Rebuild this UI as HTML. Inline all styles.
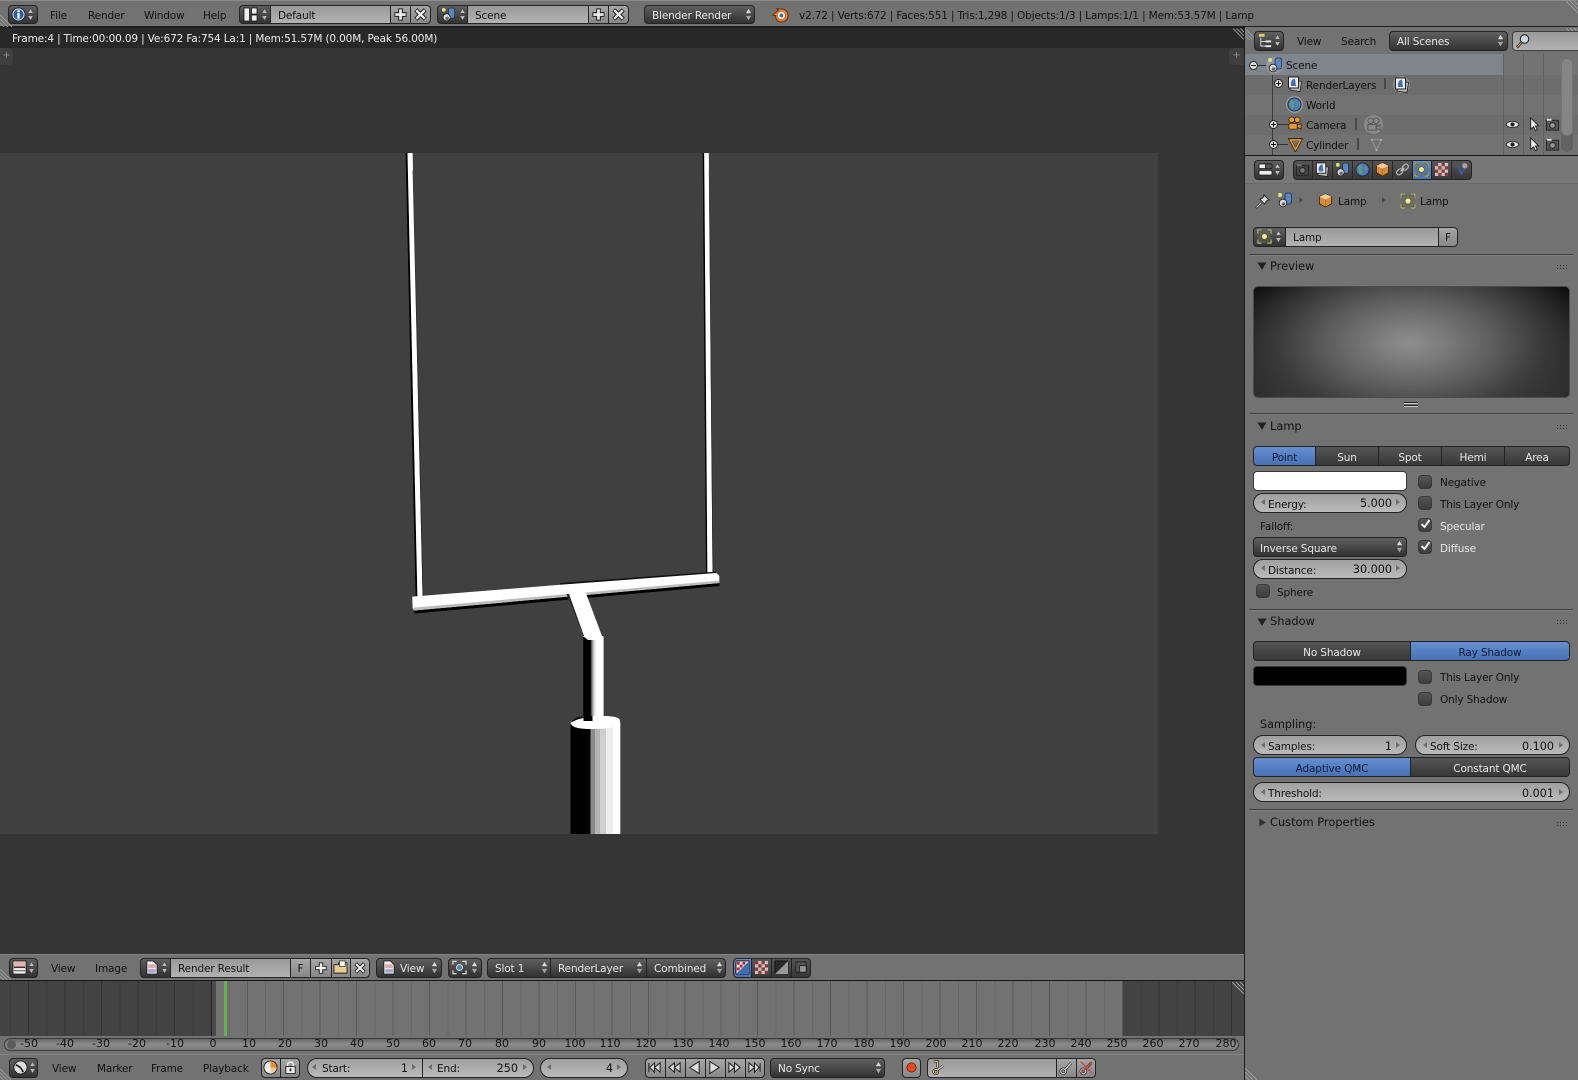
<!DOCTYPE html>
<html><head><meta charset="utf-8"><title>Blender</title>
<style>
html,body{margin:0;padding:0;background:#727272}
#r{position:relative;width:1578px;height:1080px;overflow:hidden;background:#727272;font:10.5px/16px "DejaVu Sans","Liberation Sans",sans-serif;letter-spacing:-.15px;color:#111}
#r div,#r span,#r svg{position:absolute;box-sizing:border-box}
.t{white-space:nowrap;height:16px;line-height:18px}
.w{color:#e8e8e8}
.c{transform:translateX(-50%)}
.b{border:1px solid #232323;white-space:nowrap;text-align:center;line-height:20px}
.l{line-height:22px}
.m{background:linear-gradient(#5f5f5f,#323232);color:#e8e8e8}
.f{background:linear-gradient(#999,#b2b2b2);color:#111;text-align:left;padding-left:7px}
.g{background:linear-gradient(#a6a6a6,#888)}
.n{background:linear-gradient(#a0a0a0,#bababa);border-radius:10px;color:#111}
.ra{background:linear-gradient(#555,#373737);color:#e8e8e8}
.on{background:linear-gradient(#658fd1,#4771b3);color:#0b1c3c}
.ck{width:14px;height:14px;border:1px solid #3a3a3a;border-radius:4px;background:linear-gradient(#555,#3d3d3d)}
.sep{left:1249px;width:324px;height:1px;background:#3f3f3f;box-shadow:0 1px 0 #7f7f7f}
.rl{top:1036px;transform:translateX(-50%);color:#111;height:16px;line-height:16px;font-size:11px;letter-spacing:0}
.v{font-size:11.2px;letter-spacing:0}
.ph{font-size:11.4px;letter-spacing:0;line-height:16px}
.la{width:0;height:0;border-top:3.5px solid transparent;border-bottom:3.5px solid transparent;border-right:4px solid #6d6d6d}
.rr{width:0;height:0;border-top:3.5px solid transparent;border-bottom:3.5px solid transparent;border-left:4px solid #6d6d6d}
</style></head><body><div id="r">
<svg width="0" height="0" style="left:0;top:0"><defs>
<symbol id="ud" viewBox="0 0 8 14"><path d="M4 0.5 7 5.5H1Z M4 13.5 1 8.5H7Z" fill="#bdbdbd" stroke="#333" stroke-width=".4"/></symbol>
<symbol id="ud2" viewBox="0 0 8 14"><path d="M4 0.5 7 5.5H1Z" fill="#d8d8d8"/><path d="M4 13.5 1 8.5H7Z" fill="#a8a8a8"/></symbol>
<symbol id="plus" viewBox="0 0 16 16"><path d="M8 1.5V14.5M1.5 8H14.5" stroke="#222" stroke-width="5" fill="none"/><path d="M8 2.5V13.5M2.5 8H13.5" stroke="#eee" stroke-width="2.8" fill="none"/></symbol>
<symbol id="xx" viewBox="0 0 16 16"><path d="M3 3 13 13M13 3 3 13" stroke="#222" stroke-width="4.6" fill="none"/><path d="M3.5 3.5 12.5 12.5M12.5 3.5 3.5 12.5" stroke="#eee" stroke-width="2.4" fill="none"/></symbol>
<symbol id="scene" viewBox="0 0 16 16"><circle cx="3" cy="3" r="2" fill="#e2e27a"/><rect x="8" y="1" width="6.5" height="11" rx="2" fill="#5b86c0" stroke="#1f2f4a" stroke-width=".8"/><circle cx="6" cy="11" r="3.8" fill="#dcdcdc" stroke="#222" stroke-width=".9"/><circle cx="6.5" cy="12" r="1.8" fill="#666"/></symbol>
<symbol id="rl" viewBox="0 0 16 16"><path d="M5 4 14.5 5.5 13 15.5 3 14Z" fill="#bbb" stroke="#222" stroke-width=".8"/><rect x="1.5" y="1" width="10" height="11" fill="#eee" stroke="#222" stroke-width="1"/><path d="M8 2.5C4 3 3.5 7 4 10L9 10Z" fill="#4270b8"/></symbol>
<symbol id="world" viewBox="0 0 16 16"><circle cx="8" cy="8" r="7" fill="#4d7db8" stroke="#1c2c44"/><path d="M4 4C7 2 8 5 7 7S9 11 6 13C4 11 3 7 4 4ZM11 4 13 7 11 9 10 6Z" fill="#6b9a6f"/></symbol>
<symbol id="cam" viewBox="0 0 16 16"><circle cx="5" cy="4" r="3" fill="#e69a3a" stroke="#3a2408" stroke-width=".9"/><circle cx="11" cy="4" r="3" fill="#e69a3a" stroke="#3a2408" stroke-width=".9"/><rect x="2" y="8" width="9" height="6" rx="1" fill="#e69a3a" stroke="#3a2408" stroke-width=".9"/><path d="M11 10 15 8V14L11 12Z" fill="#e69a3a" stroke="#3a2408" stroke-width=".9"/></symbol>
<symbol id="camg" viewBox="0 0 16 16"><circle cx="5" cy="4" r="3" fill="#8a8a8a" stroke="#555"/><circle cx="11" cy="4" r="3" fill="#8a8a8a" stroke="#555"/><rect x="2" y="8" width="9" height="6" fill="#8a8a8a" stroke="#555"/><path d="M11 10 15 8V14L11 12Z" fill="#8a8a8a" stroke="#555"/></symbol>
<symbol id="tri" viewBox="0 0 16 16"><path d="M2 2.5H14L8 14Z" fill="none" stroke="#3a2408" stroke-width="3"/><path d="M2.5 3H13.5L8 13.5Z" fill="none" stroke="#e69a3a" stroke-width="1.6"/></symbol>
<symbol id="trig" viewBox="0 0 16 16"><path d="M3 3H13L8 14Z" fill="none" stroke="#8f8f8f" stroke-width="1.2"/><circle cx="3" cy="3" r="1.2" fill="#aaa"/><circle cx="13" cy="3" r="1.2" fill="#aaa"/><circle cx="8" cy="14" r="1.2" fill="#aaa"/></symbol>
<symbol id="cube" viewBox="0 0 16 16"><path d="M8 1 14.5 4V11.5L8 15 1.5 11.5V4Z" fill="#d8893a" stroke="#3a2408" stroke-width=".9"/><path d="M1.5 4 8 7 14.5 4 8 1Z" fill="#f3cf9a"/><path d="M8 7V15" stroke="#a8631a" stroke-width=".6"/></symbol>
<symbol id="lamp" viewBox="0 0 16 16"><rect x="1" y="1" width="14" height="14" fill="#6b6b4e" opacity=".45"/><path d="M1 5V1H5M11 1H15V5M15 11V15H11M5 15H1V11" fill="none" stroke="#2c2c2c" stroke-width="2.4"/><path d="M1 5V1H5M11 1H15V5M15 11V15H11M5 15H1V11" fill="none" stroke="#c8d492" stroke-width="1.2"/><circle cx="8" cy="8" r="3" fill="#efef8e" stroke="#555" stroke-width=".7"/></symbol>
<symbol id="pin" viewBox="0 0 16 16"><path d="M1 15 6 10" stroke="#222" stroke-width="2"/><path d="M1.5 14.5 6 10" stroke="#ddd" stroke-width="1"/><path d="M9 2 14 7 11.5 8 9.5 11 5 6.5 8 4.5Z" fill="#ddd" stroke="#222" stroke-width="1"/></symbol>
<symbol id="scr" viewBox="0 0 16 16"><rect x="1" y="1" width="6" height="14" fill="#eee" stroke="#222"/><rect x="9" y="1" width="6" height="6.5" fill="#eee" stroke="#222"/><rect x="9" y="8.5" width="6" height="6.5" fill="#eee" stroke="#222"/></symbol>
<symbol id="blend" viewBox="0 0 18 18"><path d="M1 9 7 4.5 5 3 10 3C14 3 17 6 17 10S14 17 10 17 3.5 14 4 10L1 10Z" fill="#e8792c" stroke="#4a2408" stroke-width=".8"/><circle cx="10" cy="10" r="3.8" fill="#f5f5f5"/><circle cx="10" cy="10" r="2" fill="#3d6fb0"/></symbol>
<symbol id="outl" viewBox="0 0 16 16"><path d="M3 5V14H8M3 9H8" stroke="#ddd" stroke-width="1" fill="none"/><rect x="1" y="1" width="6" height="3" fill="#e8cd6a"/><path d="M8 9H14M8 14H14" stroke="#eee" stroke-width="2"/></symbol>
<symbol id="prop" viewBox="0 0 16 16"><rect x="1" y="2" width="14" height="5" rx="1.5" fill="#eee" stroke="#222"/><rect x="8" y="2" width="7" height="5" rx="1.5" fill="#555" stroke="#222"/><rect x="1" y="9" width="14" height="5" rx="1.5" fill="#eee" stroke="#222"/></symbol>
<symbol id="img" viewBox="0 0 16 16"><rect x="1" y="1" width="14" height="14" fill="#eee" stroke="#222"/><rect x="2" y="2" width="12" height="5" fill="#e8b4ae"/><rect x="2" y="7" width="12" height="1.6" fill="#333"/><rect x="2" y="10" width="12" height="4" fill="#f2f2f2"/><path d="M2 11.5H14" stroke="#444"/></symbol>
<symbol id="doc" viewBox="0 0 16 16"><path d="M3 1H10L14 5V15H3Z" fill="#eee" stroke="#222"/><rect x="4.5" y="4.5" width="8" height="4" fill="#e0a8a8"/><rect x="4.5" y="9.5" width="8" height="4" fill="#aaa8d0"/></symbol>
<symbol id="eye" viewBox="0 0 16 16"><path d="M1 8C4 3.5 12 3.5 15 8 12 12.5 4 12.5 1 8Z" fill="#eee" stroke="#222" stroke-width=".9"/><circle cx="8" cy="8" r="2.3" fill="#222"/></symbol>
<symbol id="arr" viewBox="0 0 16 16"><path d="M5 1V13L8 10.5 10 14.5 12 13.5 10 9.5H13.5Z" fill="#eee" stroke="#222" stroke-width="1"/></symbol>
<symbol id="rcam" viewBox="0 0 16 16"><rect x="1.5" y="3.5" width="13" height="10.5" fill="#555" stroke="#222"/><rect x="2" y="2" width="5" height="2" fill="#ddd"/><circle cx="8" cy="9" r="3" fill="#999" stroke="#222"/></symbol>
<symbol id="rcam2" viewBox="0 0 16 16"><rect x="1.5" y="4" width="13" height="10" fill="#444" stroke="#222"/><rect x="2" y="2.5" width="5" height="2" fill="#777"/><circle cx="8" cy="9" r="3" fill="#777" stroke="#222"/></symbol>
<symbol id="link" viewBox="0 0 16 16"><path d="M6 10 10 6" stroke="#bbb" stroke-width="1.4"/><rect x="1.5" y="8" width="7" height="5" rx="2.4" transform="rotate(-45 5 10.5)" fill="none" stroke="#bbb" stroke-width="1.3"/><rect x="7.5" y="3" width="7" height="5" rx="2.4" transform="rotate(-45 11 5.5)" fill="none" stroke="#bbb" stroke-width="1.3"/></symbol>
<symbol id="chk" viewBox="0 0 16 16"><g fill="#c9c0c0"><rect x="1" y="1" width="14" height="14"/></g><g fill="#8b3a3a"><rect x="1" y="1" width="3.5" height="3.5"/><rect x="8" y="1" width="3.5" height="3.5"/><rect x="4.5" y="4.5" width="3.5" height="3.5"/><rect x="11.5" y="4.5" width="3.5" height="3.5"/><rect x="1" y="8" width="3.5" height="3.5"/><rect x="8" y="8" width="3.5" height="3.5"/><rect x="4.5" y="11.5" width="3.5" height="3.5"/><rect x="11.5" y="11.5" width="3.5" height="3.5"/></g></symbol>
<symbol id="tex" viewBox="0 0 16 16"><path d="M3 3 8 12 14 4" fill="none" stroke="#3d5c8a" stroke-width="2.4"/><circle cx="11.5" cy="4" r="2.8" fill="#a5a5a5"/></symbol>
<symbol id="dispo" viewBox="0 0 16 16"><rect x="1" y="1" width="14" height="14" fill="#eee" stroke="#111"/><path d="M1 15 15 1V15Z" fill="#3e6fb5"/><g fill="#c0202a"><rect x="2" y="2" width="3" height="3"/><rect x="8" y="2" width="3" height="3"/><rect x="5" y="5" width="3" height="3"/><rect x="2" y="8" width="3" height="3"/></g></symbol>
<symbol id="alpha" viewBox="0 0 16 16"><rect x="1" y="1" width="14" height="14" fill="#2a2a2a" stroke="#111"/><path d="M1 15 15 1V15Z" fill="#999"/></symbol>
<symbol id="z" viewBox="0 0 16 16"><rect x="2" y="2" width="11" height="11" fill="#555" stroke="#222"/><rect x="6" y="6" width="7" height="7" fill="#999" stroke="#222"/></symbol>
<symbol id="piv" viewBox="0 0 16 16"><path d="M1 5V1.5H5M11 1.5H15V5M15 11V14.5H11M5 14.5H1V11" fill="none" stroke="#ddd" stroke-width="1.3"/><circle cx="8" cy="8" r="3.2" fill="#4f86c6" stroke="#ddd"/></symbol>
<symbol id="clock" viewBox="0 0 16 16"><circle cx="8" cy="8" r="7" fill="#ddd" stroke="#222"/><path d="M8 8 3 5M8 8 11 13" stroke="#222" stroke-width="1.8"/></symbol>
<symbol id="prv" viewBox="0 0 16 16"><circle cx="8" cy="8" r="7" fill="#eee" stroke="#222"/><path d="M8 8V1.5A6.5 6.5 0 0 1 14.5 8Z" fill="#e8912c"/><path d="M8 8H14.5A6.5 6.5 0 0 1 9 14.4Z" fill="#eac89a"/></symbol>
<symbol id="lock" viewBox="0 0 16 16"><path d="M5 7V4.5C5 1.5 11 1.5 11 4.5V7" fill="none" stroke="#eee" stroke-width="1.6"/><rect x="3" y="7" width="10" height="7.5" fill="#eee" stroke="#222"/><rect x="7" y="9" width="2" height="3" fill="#333"/></symbol>
<symbol id="folder" viewBox="0 0 16 16"><path d="M1 5H6V3H15V14H1Z" fill="#e3cf92" stroke="#222"/><rect x="7" y="1" width="6" height="6" fill="#f4f4f4" stroke="#222" stroke-width=".7"/></symbol>
<symbol id="key" viewBox="0 0 16 16"><circle cx="4.5" cy="12" r="2.6" fill="none" stroke="#222" stroke-width="2.6"/><circle cx="4.5" cy="12" r="2.6" fill="none" stroke="#ddd" stroke-width="1.2"/><path d="M6.5 10 13 3" stroke="#222" stroke-width="2.8"/><path d="M6.5 10 13 3" stroke="#eee" stroke-width="1.3"/></symbol>
<symbol id="key2" viewBox="0 0 16 16"><path d="M3 1.5H7V8" fill="none" stroke="#222" stroke-width="2.4"/><path d="M3 1.5H7V8" fill="none" stroke="#e6d47a" stroke-width="1"/><circle cx="5" cy="12.5" r="2.4" fill="none" stroke="#222" stroke-width="2.4"/><circle cx="5" cy="12.5" r="2.4" fill="none" stroke="#e6d47a" stroke-width="1"/><path d="M7 10.5 13 6" stroke="#222" stroke-width="2.6"/><path d="M7 10.5 13 6" stroke="#eee" stroke-width="1.2"/></symbol>
<symbol id="keyx" viewBox="0 0 16 16"><use href="#key"/><path d="M2 2 14 14M14 2 2 14" stroke="#c94a4a" stroke-width="1.6"/></symbol>
<symbol id="hatch" viewBox="0 0 12 12"><path d="M0 0 12 12M4 0 12 8M8 0 12 4" stroke="#9a9a9a" stroke-width="1" fill="none"/></symbol>
<symbol id="hatchb" viewBox="0 0 12 12"><path d="M0 0 12 12M0 4 8 12M0 8 4 12" stroke="#9a9a9a" stroke-width="1" fill="none"/></symbol>
<symbol id="grip" viewBox="0 0 12 5"><g fill="#333"><rect x="0" y="0" width="1" height="1"/><rect x="3" y="0" width="1" height="1"/><rect x="6" y="0" width="1" height="1"/><rect x="9" y="0" width="1" height="1"/><rect x="0" y="3" width="1" height="1"/><rect x="3" y="3" width="1" height="1"/><rect x="6" y="3" width="1" height="1"/><rect x="9" y="3" width="1" height="1"/></g></symbol>
<symbol id="tr-d" viewBox="0 0 10 10"><path d="M0.5 1.5H9.5L5 9Z" fill="#222"/></symbol>
<symbol id="tr-r" viewBox="0 0 10 10"><path d="M1.5 .5V9.5L9 5Z" fill="#333"/></symbol>
<symbol id="jl" viewBox="0 0 16 16"><path d="M2 3V13M14 3 8 8 14 13ZM8 3 3 8 8 13Z" fill="#ddd" stroke="#222" stroke-width="1.1"/></symbol>
<symbol id="jr" viewBox="0 0 16 16"><path d="M14 3V13M2 3 8 8 2 13ZM8 3 13 8 8 13Z" fill="#ddd" stroke="#222" stroke-width="1.1"/></symbol>
<symbol id="kl" viewBox="0 0 16 16"><path d="M14 3 8 8 14 13ZM8 3 2 8 8 13Z" fill="#ddd" stroke="#222" stroke-width="1.1"/></symbol>
<symbol id="kr" viewBox="0 0 16 16"><path d="M2 3 8 8 2 13ZM8 3 14 8 8 13Z" fill="#ddd" stroke="#222" stroke-width="1.1"/></symbol>
<symbol id="pl" viewBox="0 0 16 16"><path d="M13 1.5 3 8 13 14.5Z" fill="#ddd" stroke="#222" stroke-width="1.1"/></symbol>
<symbol id="pr" viewBox="0 0 16 16"><path d="M3 1.5 13 8 3 14.5Z" fill="#ddd" stroke="#222" stroke-width="1.1"/></symbol>
</defs></svg>

<!-- top header -->
<div style="left:0;top:0;width:1578px;height:27px;background:#727272;box-shadow:inset 0 1px 0 #8a8a8a"></div>
<div style="left:0;top:26px;width:1578px;height:2px;background:#1d1d1d"></div>
<svg style="left:0;top:15px" width="12" height="12"><use href="#hatchb"/></svg>
<svg style="left:1566px;top:1px" width="12" height="12"><use href="#hatch"/></svg>
<div class="b m" style="left:8px;top:5px;width:30px;height:19px;border-radius:4px"></div>
<svg style="left:11px;top:7px" width="15" height="15" viewBox="0 0 16 16"><circle cx="8" cy="8" r="7" fill="#dfe8f2" stroke="#223"/><circle cx="8" cy="8" r="5.5" fill="#2f5f9e"/><rect x="6.8" y="6.5" width="2.4" height="6" fill="#fff"/><rect x="6.8" y="3.4" width="2.4" height="2.2" fill="#fff"/></svg>
<svg style="left:27px;top:8px" width="7" height="13"><use href="#ud"/></svg>
<span class="t" style="left:50px;top:7px">File</span>
<span class="t" style="left:88px;top:7px">Render</span>
<span class="t" style="left:144px;top:7px">Window</span>
<span class="t" style="left:203px;top:7px">Help</span>

<div class="b m" style="left:239px;top:5px;width:32px;height:19px;border-radius:4px 0 0 4px"></div>
<svg style="left:243px;top:7px" width="15" height="15"><use href="#scr"/></svg>
<svg style="left:261px;top:8px" width="7" height="13"><use href="#ud"/></svg>
<div class="b f" style="left:270px;top:5px;width:121px;height:19px">Default</div>
<div class="b g" style="left:390px;top:5px;width:21px;height:19px"></div>
<svg style="left:393px;top:7px" width="15" height="15"><use href="#plus"/></svg>
<div class="b g" style="left:410px;top:5px;width:21px;height:19px;border-radius:0 4px 4px 0"></div>
<svg style="left:413px;top:7px" width="15" height="15"><use href="#xx"/></svg>

<div class="b m" style="left:437px;top:5px;width:31px;height:19px;border-radius:4px 0 0 4px"></div>
<svg style="left:441px;top:7px" width="15" height="15"><use href="#scene"/></svg>
<svg style="left:459px;top:8px" width="7" height="13"><use href="#ud"/></svg>
<div class="b f" style="left:467px;top:5px;width:122px;height:19px">Scene</div>
<div class="b g" style="left:588px;top:5px;width:21px;height:19px"></div>
<svg style="left:591px;top:7px" width="15" height="15"><use href="#plus"/></svg>
<div class="b g" style="left:608px;top:5px;width:21px;height:19px;border-radius:0 4px 4px 0"></div>
<svg style="left:611px;top:7px" width="15" height="15"><use href="#xx"/></svg>

<div class="b m" style="left:644px;top:5px;width:111px;height:19px;border-radius:4px;text-align:left;padding-left:7px">Blender Render</div>
<svg style="left:745px;top:8px" width="7" height="13"><use href="#ud2"/></svg>
<svg style="left:772px;top:6px" width="17" height="17"><use href="#blend"/></svg>
<span class="t" style="left:799px;top:7px;width:460px">v2.72 | Verts:672 | Faces:551 | Tris:1,298 | Objects:1/3 | Lamps:1/1 | Mem:53.57M | Lamp</span>

<!-- 3D / image view -->
<div style="left:0;top:28px;width:1245px;height:926px;background:#353535"></div>
<div style="left:0;top:28px;width:1245px;height:20px;background:#282828"></div>
<span class="t w" style="left:12px;top:30px;color:#eee">Frame:4 | Time:00:00.09 | Ve:672 Fa:754 La:1 | Mem:51.57M (0.00M, Peak 56.00M)</span>
<svg style="left:1233px;top:28px" width="11" height="12"><use href="#hatch"/></svg>
<div style="left:0;top:48px;width:13px;height:17px;background:#3f3f3f;border-radius:0 4px 4px 0;color:#888;text-align:center;line-height:16px;font-size:10px">+</div>
<div style="left:1229px;top:48px;width:15px;height:17px;background:#3f3f3f;border-radius:4px 0 0 4px;color:#888;text-align:center;line-height:16px;font-size:10px">+</div>
<div style="left:0;top:153px;width:1158px;height:681px;background:#404040"></div>

<svg style="left:0;top:0" width="1245" height="954" viewBox="0 0 1245 954">
<defs>
<clipPath id="img2"><rect x="0" y="153" width="1158" height="681"/></clipPath>
<linearGradient id="poleg" x1="0" x2="1" y1="0" y2="0"><stop offset="0" stop-color="#000"/><stop offset=".35" stop-color="#000"/><stop offset=".42" stop-color="#777"/><stop offset=".55" stop-color="#e8e8e8"/><stop offset=".7" stop-color="#fff"/><stop offset="1" stop-color="#fff"/></linearGradient>
<linearGradient id="fadeL" x1="0" x2="0" y1="0" y2="1"><stop offset="0" stop-color="#404040"/><stop offset=".3" stop-color="#333"/><stop offset="1" stop-color="#222"/></linearGradient>
</defs>
<g clip-path="url(#img2)">
<polygon points="405.6,153 407.5,153 417.4,596 415.6,596" fill="#000"/>
<polygon points="407.5,153 412.6,153 422.6,596 417.4,596" fill="#fff"/>
<polygon points="412.6,170 413.6,170 423.4,596 422.6,596" fill="url(#fadeL)"/>
<polygon points="702.7,153 704.2,153 707.4,576 706,576" fill="#000"/>
<polygon points="704.2,153 708.8,153 712.6,576 707.4,576" fill="#fff"/>
<polygon points="708.8,170 709.8,170 713.2,576 712.6,576" fill="url(#fadeL)"/>
<!-- crossbar -->
<polygon points="414,606 719,580 719.5,586 414.5,613.5" fill="#000"/>
<polygon points="560,583 716,571.6 716,573 560,585" fill="#111"/>
<polygon points="412.3,596.6 560,584.8 716.5,573 719.3,576 719.3,583 414,610.5 412.6,608" fill="#fff"/>
<polygon points="414,607.6 719.3,580.6 719.3,583 414,610.5" fill="#bdbdbd"/>
<!-- stem -->
<polygon points="566.5,594 585.5,592 602,636 603.4,640 588,640 583,636" fill="#fff"/>
<polygon points="566.5,594 569,594 584,636 583,636" fill="#222"/>
<rect x="583.3" y="637" width="20.3" height="88" fill="url(#poleg)"/>
<polygon points="583,636 588,640 603.4,640 603.4,636" fill="#fff"/>
<!-- base -->
<rect x="570.5" y="722" width="20" height="112" fill="#000"/>
<rect x="590.5" y="727" width="4.5" height="107" fill="#8c8c8c"/>
<rect x="595" y="727" width="5" height="107" fill="#b4b4b4"/>
<rect x="600" y="727" width="6" height="107" fill="#cfcfcf"/>
<rect x="606" y="727" width="7" height="107" fill="#ededed"/>
<rect x="613" y="722" width="7.3" height="112" fill="#fff"/>
<path d="M570.5 722.5C572 717 582 716 585 716.5L604 716C611 716 619 717 620 720L620 724C616 728 604 729 590 729C578 729 571 727 570.5 722.5Z" fill="#fff"/>
<path d="M570.5 722.5C573 717 580 716 585 716.5L585 718C578 718.5 575 721 570.5 722.5Z" fill="#111"/>
<rect x="583.5" y="716" width="9" height="5" fill="#000"/>
<rect x="592.5" y="716" width="11" height="6" fill="#fff"/>
</g></svg>

<!-- image editor header -->
<div style="left:0;top:954px;width:1245px;height:26px;background:#727272;box-shadow:inset 0 1px 0 #848484"></div>
<div style="left:0;top:980px;width:1245px;height:1px;background:#161616"></div>
<svg style="left:0;top:969px" width="11" height="11"><use href="#hatchb"/></svg>
<div class="b m" style="left:9px;top:958px;width:29px;height:20px;border-radius:4px"></div>
<svg style="left:12px;top:960px" width="15" height="15"><use href="#img"/></svg>
<svg style="left:28px;top:961px" width="7" height="13"><use href="#ud"/></svg>
<span class="t" style="left:51px;top:960px">View</span>
<span class="t" style="left:95px;top:960px">Image</span>

<div class="b m" style="left:140px;top:958px;width:31px;height:20px;border-radius:4px 0 0 4px"></div>
<svg style="left:144px;top:960px" width="15" height="15"><use href="#doc"/></svg>
<svg style="left:161px;top:961px" width="7" height="13"><use href="#ud"/></svg>
<div class="b f" style="left:170px;top:958px;width:121px;height:20px">Render Result</div>
<div class="b g" style="left:290px;top:958px;width:21px;height:20px">F</div>
<div class="b g" style="left:310px;top:958px;width:22px;height:20px"></div>
<svg style="left:314px;top:961px" width="14" height="14"><use href="#plus"/></svg>
<div class="b g" style="left:331px;top:958px;width:20px;height:20px"></div>
<svg style="left:333px;top:960px" width="15" height="15"><use href="#folder"/></svg>
<div class="b g" style="left:350px;top:958px;width:20px;height:20px;border-radius:0 4px 4px 0"></div>
<svg style="left:353px;top:961px" width="14" height="14"><use href="#xx"/></svg>

<div class="b m" style="left:376px;top:958px;width:66px;height:20px;border-radius:4px;text-align:left;padding-left:23px">View</div>
<svg style="left:381px;top:960px" width="15" height="15"><use href="#doc"/></svg>
<svg style="left:431px;top:961px" width="7" height="13"><use href="#ud2"/></svg>
<div class="b m" style="left:448px;top:958px;width:34px;height:20px;border-radius:4px"></div>
<svg style="left:452px;top:960px" width="15" height="15"><use href="#piv"/></svg>
<svg style="left:471px;top:961px" width="7" height="13"><use href="#ud2"/></svg>
<div class="b m" style="left:487px;top:958px;width:64px;height:20px;border-radius:4px 0 0 4px;text-align:left;padding-left:7px">Slot 1</div>
<svg style="left:541px;top:961px" width="7" height="13"><use href="#ud2"/></svg>
<div class="b m" style="left:550px;top:958px;width:97px;height:20px;text-align:left;padding-left:7px">RenderLayer</div>
<svg style="left:636px;top:961px" width="7" height="13"><use href="#ud2"/></svg>
<div class="b m" style="left:646px;top:958px;width:80px;height:20px;border-radius:0 4px 4px 0;text-align:left;padding-left:7px">Combined</div>
<svg style="left:716px;top:961px" width="7" height="13"><use href="#ud2"/></svg>
<div class="b on" style="left:733px;top:958px;width:19px;height:20px;border-radius:4px 0 0 4px"></div>
<svg style="left:735px;top:960px" width="15" height="15"><use href="#dispo"/></svg>
<div class="b ra" style="left:751px;top:958px;width:21px;height:20px"></div>
<svg style="left:754px;top:960px" width="15" height="15"><use href="#chk"/></svg>
<div class="b ra" style="left:771px;top:958px;width:21px;height:20px"></div>
<svg style="left:774px;top:960px" width="15" height="15"><use href="#alpha"/></svg>
<div class="b ra" style="left:791px;top:958px;width:20px;height:20px;border-radius:0 4px 4px 0"></div>
<svg style="left:794px;top:960px" width="15" height="15"><use href="#z"/></svg>

<!-- timeline -->
<div style="left:0;top:981px;width:1245px;height:69px;background:#727272"></div>
<div style="left:0;top:981px;width:211px;height:55px;background:#434343"></div>
<div style="left:211px;top:981px;width:5px;height:55px;background:#4a4a4a;box-shadow:inset 1px 0 0 #2a2a2a"></div>
<div style="left:1123px;top:981px;width:122px;height:55px;background:#434343"></div>
<div style="left:0;top:981px;width:1245px;height:55px;background:repeating-linear-gradient(90deg,transparent 0,transparent 28px,rgba(0,0,0,.22) 28px,rgba(0,0,0,.22) 29px,transparent 29px,transparent 36.46px)"></div>
<div style="left:0;top:981px;width:1245px;height:55px;background:repeating-linear-gradient(90deg,transparent 0,transparent 10px,rgba(0,0,0,.09) 10px,rgba(0,0,0,.09) 11px,transparent 11px,transparent 36.46px)"></div>
<div style="left:224px;top:981px;width:3px;height:55px;background:#5fb44c"></div>
<svg style="left:1232px;top:982px" width="12" height="12"><use href="#hatch"/></svg>
<div style="left:4px;top:1038px;width:1235px;height:13px;border:1px solid #3a3a3a;border-radius:7px;background:linear-gradient(#646464,#8c8c8c 45%,#7a7a7a)"></div>
<div style="left:7px;top:1040px;width:9px;height:9px;border-radius:5px;background:#5b5b5b"></div>
<span class="rl" style="left:29px">-50</span><span class="rl" style="left:65px">-40</span><span class="rl" style="left:101px">-30</span><span class="rl" style="left:137px">-20</span><span class="rl" style="left:175px">-10</span><span class="rl" style="left:213px">0</span><span class="rl" style="left:249px">10</span><span class="rl" style="left:285px">20</span><span class="rl" style="left:321px">30</span><span class="rl" style="left:357px">40</span><span class="rl" style="left:393px">50</span><span class="rl" style="left:429px">60</span><span class="rl" style="left:465px">70</span><span class="rl" style="left:502px">80</span><span class="rl" style="left:539px">90</span><span class="rl" style="left:575px">100</span><span class="rl" style="left:610px">110</span><span class="rl" style="left:646px">120</span><span class="rl" style="left:683px">130</span><span class="rl" style="left:719px">140</span><span class="rl" style="left:755px">150</span><span class="rl" style="left:791px">160</span><span class="rl" style="left:827px">170</span><span class="rl" style="left:864px">180</span><span class="rl" style="left:900px">190</span><span class="rl" style="left:936px">200</span><span class="rl" style="left:972px">210</span><span class="rl" style="left:1008px">220</span><span class="rl" style="left:1045px">230</span><span class="rl" style="left:1081px">240</span><span class="rl" style="left:1117px">250</span><span class="rl" style="left:1153px">260</span><span class="rl" style="left:1189px">270</span><span class="rl" style="left:1226px">280</span>

<!-- timeline header -->
<div style="left:0;top:1054px;width:1245px;height:26px;background:#727272;box-shadow:inset 0 1px 0 #858585"></div>
<svg style="left:0;top:1069px" width="11" height="11"><use href="#hatchb"/></svg>
<div class="b m" style="left:9px;top:1058px;width:29px;height:20px;border-radius:4px"></div>
<svg style="left:13px;top:1060px" width="15" height="15"><use href="#clock"/></svg>
<svg style="left:29px;top:1061px" width="7" height="13"><use href="#ud"/></svg>
<span class="t" style="left:52px;top:1060px">View</span>
<span class="t" style="left:97px;top:1060px">Marker</span>
<span class="t" style="left:151px;top:1060px">Frame</span>
<span class="t" style="left:203px;top:1060px">Playback</span>
<div class="b g" style="left:261px;top:1058px;width:20px;height:20px;border-radius:4px 0 0 4px"></div>
<svg style="left:263px;top:1060px" width="15" height="15"><use href="#prv"/></svg>
<div class="b g" style="left:280px;top:1058px;width:20px;height:20px;border-radius:0 4px 4px 0"></div>
<svg style="left:283px;top:1060px" width="15" height="15"><use href="#lock"/></svg>
<div class="b n" style="left:307px;top:1058px;width:116px;height:20px;border-radius:10px 0 0 10px;text-align:left;padding-left:14px">Start:</div>
<span class="t v" style="right:1170px;top:1060px">1</span>
<div class="la" style="left:312px;top:1064px"></div><div class="rr" style="left:412px;top:1064px"></div>
<div class="b n" style="left:422px;top:1058px;width:112px;height:20px;border-radius:0 10px 10px 0;text-align:left;padding-left:14px">End:</div>
<span class="t v" style="right:1060px;top:1060px">250</span>
<div class="la" style="left:428px;top:1064px"></div><div class="rr" style="left:523px;top:1064px"></div>
<div class="b n" style="left:540px;top:1058px;width:88px;height:20px"></div>
<span class="t v" style="right:965px;top:1060px">4</span>
<div class="la" style="left:547px;top:1064px"></div><div class="rr" style="left:617px;top:1064px"></div>

<div class="b g" style="left:645px;top:1058px;width:21px;height:20px;border-radius:4px 0 0 4px"></div>
<svg style="left:647px;top:1060px" width="15" height="15"><use href="#jl"/></svg>
<div class="b g" style="left:665px;top:1058px;width:21px;height:20px"></div>
<svg style="left:667px;top:1060px" width="15" height="15"><use href="#kl"/></svg>
<div class="b g" style="left:685px;top:1058px;width:21px;height:20px"></div>
<svg style="left:687px;top:1060px" width="15" height="15"><use href="#pl"/></svg>
<div class="b g" style="left:705px;top:1058px;width:21px;height:20px"></div>
<svg style="left:707px;top:1060px" width="15" height="15"><use href="#pr"/></svg>
<div class="b g" style="left:725px;top:1058px;width:21px;height:20px"></div>
<svg style="left:727px;top:1060px" width="15" height="15"><use href="#kr"/></svg>
<div class="b g" style="left:745px;top:1058px;width:20px;height:20px;border-radius:0 4px 4px 0"></div>
<svg style="left:747px;top:1060px" width="15" height="15"><use href="#jr"/></svg>
<div class="b m" style="left:770px;top:1058px;width:115px;height:20px;border-radius:4px;text-align:left;padding-left:7px">No Sync</div>
<svg style="left:875px;top:1061px" width="7" height="13"><use href="#ud2"/></svg>
<div class="b g" style="left:902px;top:1058px;width:19px;height:20px;border-radius:4px"></div>
<svg style="left:906px;top:1062px" width="11" height="11" viewBox="0 0 11 11"><circle cx="5.5" cy="5.5" r="4.6" fill="#e8481a" stroke="#5a2210" stroke-width=".8"/></svg>
<div class="b f" style="left:927px;top:1058px;width:130px;height:20px;border-radius:4px 0 0 4px"></div>
<svg style="left:931px;top:1060px" width="15" height="15"><use href="#key2"/></svg>
<div class="b g" style="left:1056px;top:1058px;width:21px;height:20px"></div>
<svg style="left:1059px;top:1060px" width="15" height="15"><use href="#key"/></svg>
<div class="b g" style="left:1076px;top:1058px;width:20px;height:20px;border-radius:0 4px 4px 0"></div>
<svg style="left:1079px;top:1060px" width="15" height="15"><use href="#keyx"/></svg>

<!-- right column -->
<div style="left:1245px;top:27px;width:333px;height:1053px;background:#727272"></div>
<div style="left:1244px;top:27px;width:1px;height:1053px;background:#1c1c1c"></div>
<svg style="left:1245px;top:28px" width="11" height="12"><use href="#hatchb"/></svg>
<svg style="left:1566px;top:28px" width="12" height="12"><use href="#hatch"/></svg>
<svg style="left:1245px;top:1068px" width="12" height="12"><use href="#hatchb"/></svg>
<svg style="left:1566px;top:156px" width="12" height="12"><use href="#hatch"/></svg>

<!-- outliner header -->
<div class="b m" style="left:1254px;top:31px;width:30px;height:20px;border-radius:4px"></div>
<svg style="left:1258px;top:33px" width="15" height="15"><use href="#outl"/></svg>
<svg style="left:1274px;top:34px" width="7" height="13"><use href="#ud"/></svg>
<span class="t" style="left:1297px;top:33px">View</span>
<span class="t" style="left:1341px;top:33px">Search</span>
<div class="b m" style="left:1389px;top:31px;width:119px;height:20px;border-radius:4px;text-align:left;padding-left:7px">All Scenes</div>
<svg style="left:1497px;top:34px" width="7" height="13"><use href="#ud2"/></svg>
<div class="b f" style="left:1512px;top:31px;width:70px;height:20px;border-radius:4px 0 0 4px;border-color:#3e3e3e"></div>
<svg style="left:1515px;top:33px" width="16" height="16" viewBox="0 0 16 16"><circle cx="9.5" cy="6" r="4.3" fill="#cfd6dd" stroke="#222" stroke-width="1.1"/><path d="M6.5 9.5 2 14.5" stroke="#222" stroke-width="2.6"/><path d="M6.5 9.5 2.2 14.2" stroke="#d2a866" stroke-width="1"/></svg>

<!-- outliner -->
<div style="left:1245px;top:54px;width:333px;height:101px;background:#6d6d6d"></div>
<div style="left:1245px;top:54px;width:258px;height:21px;background:#7e858c"></div>
<div style="left:1503px;top:54px;width:75px;height:21px;background:#737373"></div>
<div style="left:1245px;top:95px;width:333px;height:20px;background:#727272"></div>
<div style="left:1245px;top:135px;width:333px;height:20px;background:#727272"></div>
<div style="left:1503px;top:54px;width:1px;height:101px;background:#5f5f5f"></div>
<div style="left:1523px;top:54px;width:1px;height:101px;background:#5f5f5f"></div>
<div style="left:1543px;top:54px;width:1px;height:101px;background:#5f5f5f"></div>
<div style="left:1561px;top:58px;width:12px;height:94px;border-radius:6px;background:#636363"></div>
<div style="left:1561px;top:58px;width:12px;height:78px;border-radius:6px;background:#858585;box-shadow:inset 0 0 0 1px #747474"></div>
<!-- tree lines -->
<div style="left:1272px;top:75px;width:1px;height:80px;background:#3c3c3c"></div>
<div style="left:1257px;top:65px;width:9px;height:1px;background:#333"></div>
<div style="left:1278px;top:124px;width:10px;height:1px;background:#333"></div>
<div style="left:1278px;top:144px;width:10px;height:1px;background:#333"></div>
<div style="left:1249px;top:61px;width:9px;height:9px;border-radius:5px;background:#ddd;border:1px solid #222"></div>
<div style="left:1251px;top:65px;width:5px;height:1px;background:#111"></div>
<div style="left:1274px;top:79px;width:9px;height:9px;border-radius:5px;background:#ddd;border:1px solid #222"></div>
<div style="left:1276px;top:83px;width:5px;height:1px;background:#111"></div>
<div style="left:1278px;top:81px;width:1px;height:5px;background:#111"></div>
<div style="left:1269px;top:120px;width:9px;height:9px;border-radius:5px;background:#ddd;border:1px solid #222"></div>
<div style="left:1271px;top:124px;width:5px;height:1px;background:#111"></div>
<div style="left:1273px;top:122px;width:1px;height:5px;background:#111"></div>
<div style="left:1269px;top:140px;width:9px;height:9px;border-radius:5px;background:#ddd;border:1px solid #222"></div>
<div style="left:1271px;top:144px;width:5px;height:1px;background:#111"></div>
<div style="left:1273px;top:142px;width:1px;height:5px;background:#111"></div>

<div style="left:1266px;top:57px;width:17px;height:17px;border-radius:9px;background:#92979c"></div>
<svg style="left:1267px;top:57px" width="16" height="16"><use href="#scene"/></svg>
<span class="t" style="left:1286px;top:57px">Scene</span>
<svg style="left:1287px;top:76px" width="16" height="16"><use href="#rl"/></svg>
<span class="t" style="left:1306px;top:77px">RenderLayers</span>
<div style="left:1384px;top:78px;width:2px;height:11px;background:#4a4a4a"></div>
<div style="left:1393px;top:76px;width:17px;height:17px;border-radius:9px;background:#8a8a8a"></div>
<svg style="left:1394px;top:77px" width="16" height="16"><use href="#rl"/></svg>
<div style="left:1286px;top:96px;width:17px;height:17px;border-radius:9px;background:#9a9a9a"></div>
<svg style="left:1287px;top:97px" width="15" height="15"><use href="#world"/></svg>
<span class="t" style="left:1306px;top:97px">World</span>
<svg style="left:1287px;top:116px" width="15" height="15"><use href="#cam"/></svg>
<span class="t" style="left:1306px;top:117px">Camera</span>
<div style="left:1355px;top:118px;width:2px;height:12px;background:#4a4a4a"></div>
<div style="left:1364px;top:115px;width:19px;height:19px;border-radius:10px;background:#8a8a8a"></div>
<svg style="left:1366px;top:117px" width="15" height="15"><use href="#camg"/></svg>
<svg style="left:1288px;top:137px" width="15" height="15"><use href="#tri"/></svg>
<span class="t" style="left:1306px;top:137px">Cylinder</span>
<div style="left:1357px;top:138px;width:2px;height:12px;background:#4a4a4a"></div>
<svg style="left:1369px;top:137px" width="15" height="15"><use href="#trig"/></svg>
<svg style="left:1505px;top:117px" width="15" height="15"><use href="#eye"/></svg>
<svg style="left:1526px;top:117px" width="15" height="15"><use href="#arr"/></svg>
<svg style="left:1545px;top:117px" width="15" height="15"><use href="#rcam"/></svg>
<svg style="left:1505px;top:137px" width="15" height="15"><use href="#eye"/></svg>
<svg style="left:1526px;top:137px" width="15" height="15"><use href="#arr"/></svg>
<svg style="left:1545px;top:137px" width="15" height="15"><use href="#rcam"/></svg>

<!-- properties header -->
<div style="left:1245px;top:155px;width:333px;height:1px;background:#151515"></div>
<div style="left:1245px;top:156px;width:333px;height:27px;background:#777"></div>
<div style="left:1245px;top:183px;width:333px;height:1px;background:#6a6a6a"></div>
<div class="b m" style="left:1254px;top:160px;width:30px;height:20px;border-radius:4px"></div>
<svg style="left:1258px;top:162px" width="15" height="15"><use href="#prop"/></svg>
<svg style="left:1274px;top:163px" width="7" height="13"><use href="#ud"/></svg>
<div class="b ra" style="left:1293px;top:160px;width:179px;height:20px;border-radius:4px"></div>
<div class="b on" style="left:1412px;top:160px;width:20px;height:20px"></div>
<svg style="left:1295px;top:162px" width="15" height="15"><use href="#rcam2"/></svg>
<svg style="left:1315px;top:162px" width="15" height="15"><use href="#rl"/></svg>
<svg style="left:1335px;top:162px" width="15" height="15"><use href="#scene"/></svg>
<svg style="left:1355px;top:162px" width="15" height="15"><use href="#world"/></svg>
<svg style="left:1375px;top:162px" width="15" height="15"><use href="#cube"/></svg>
<svg style="left:1395px;top:162px" width="15" height="15"><use href="#link"/></svg>
<svg style="left:1414px;top:162px" width="15" height="15"><use href="#lamp"/></svg>
<svg style="left:1434px;top:162px" width="15" height="15"><use href="#chk"/></svg>
<svg style="left:1454px;top:162px" width="15" height="15"><use href="#tex"/></svg>
<div style="left:1312px;top:161px;width:1px;height:18px;background:#2a2a2a"></div>
<div style="left:1332px;top:161px;width:1px;height:18px;background:#2a2a2a"></div>
<div style="left:1352px;top:161px;width:1px;height:18px;background:#2a2a2a"></div>
<div style="left:1372px;top:161px;width:1px;height:18px;background:#2a2a2a"></div>
<div style="left:1392px;top:161px;width:1px;height:18px;background:#2a2a2a"></div>
<div style="left:1451px;top:161px;width:1px;height:18px;background:#2a2a2a"></div>

<!-- breadcrumb -->
<svg style="left:1255px;top:193px" width="16" height="16"><use href="#pin"/></svg>
<svg style="left:1277px;top:192px" width="16" height="16"><use href="#scene"/></svg>
<div class="rr" style="left:1299px;top:197px;border-left-color:#4a4a4a"></div>
<svg style="left:1318px;top:193px" width="15" height="15"><use href="#cube"/></svg>
<span class="t" style="left:1338px;top:193px">Lamp</span>
<div class="rr" style="left:1382px;top:197px;border-left-color:#4a4a4a"></div>
<svg style="left:1400px;top:193px" width="16" height="16"><use href="#lamp"/></svg>
<span class="t" style="left:1420px;top:193px">Lamp</span>

<div class="b m" style="left:1253px;top:227px;width:33px;height:20px;border-radius:4px 0 0 4px"></div>
<svg style="left:1257px;top:229px" width="15" height="15"><use href="#lamp"/></svg>
<svg style="left:1275px;top:230px" width="7" height="13"><use href="#ud"/></svg>
<div class="b f" style="left:1285px;top:227px;width:154px;height:20px">Lamp</div>
<div class="b g" style="left:1438px;top:227px;width:20px;height:20px;border-radius:0 4px 4px 0">F</div>

<!-- Preview -->
<div class="sep" style="top:254px"></div>
<svg style="left:1257px;top:261px" width="10" height="10"><use href="#tr-d"/></svg>
<span class="t ph" style="left:1270px;top:258px">Preview</span>
<svg style="left:1557px;top:265px" width="12" height="5"><use href="#grip"/></svg>
<div style="left:1253px;top:286px;width:317px;height:112px;border:1px solid #4c4c4c;border-radius:5px;background:radial-gradient(ellipse 185px 100px at 49.5% 51%,#8e8e8e 0%,#7c7c7c 18%,#5e5e5e 44%,rgba(62,62,62,.85) 72%,rgba(50,50,50,0) 100%),linear-gradient(#0e0e0e,#2e2e2e)"></div>
<div style="left:1404px;top:402px;width:14px;height:1px;background:#222;box-shadow:0 1px 0 #ccc,0 3px 0 #222,0 4px 0 #ccc"></div>

<!-- Lamp -->
<div class="sep" style="top:413px"></div>
<svg style="left:1257px;top:421px" width="10" height="10"><use href="#tr-d"/></svg>
<span class="t ph" style="left:1270px;top:418px">Lamp</span>
<svg style="left:1557px;top:425px" width="12" height="5"><use href="#grip"/></svg>
<div class="b on l" style="left:1253px;top:446px;width:63px;height:20px;border-radius:4px 0 0 4px">Point</div>
<div class="b ra l" style="left:1315px;top:446px;width:64px;height:20px">Sun</div>
<div class="b ra l" style="left:1378px;top:446px;width:64px;height:20px">Spot</div>
<div class="b ra l" style="left:1441px;top:446px;width:64px;height:20px">Hemi</div>
<div class="b ra l" style="left:1504px;top:446px;width:66px;height:20px;border-radius:0 4px 4px 0">Area</div>
<div class="b" style="left:1253px;top:471px;width:154px;height:20px;background:#fff;border-radius:4px;border-color:#383838"></div>
<div class="b n l" style="left:1253px;top:493px;width:154px;height:20px;text-align:left;padding-left:14px">Energy:</div>
<span class="t v" style="right:186px;top:495px">5.000</span>
<div class="la" style="left:1261px;top:499px"></div><div class="rr" style="left:1396px;top:499px"></div>
<span class="t" style="left:1260px;top:518px">Falloff:</span>
<div class="b m l" style="left:1253px;top:537px;width:154px;height:20px;border-radius:4px;text-align:left;padding-left:6px">Inverse Square</div>
<svg style="left:1396px;top:540px" width="7" height="13"><use href="#ud2"/></svg>
<div class="b n l" style="left:1253px;top:559px;width:154px;height:20px;text-align:left;padding-left:14px">Distance:</div>
<span class="t v" style="right:186px;top:561px">30.000</span>
<div class="la" style="left:1261px;top:565px"></div><div class="rr" style="left:1396px;top:565px"></div>
<div class="ck" style="left:1256px;top:584px"></div>
<span class="t" style="left:1277px;top:584px">Sphere</span>

<div class="ck" style="left:1418px;top:475px"></div>
<span class="t" style="left:1440px;top:474px">Negative</span>
<div class="ck" style="left:1418px;top:496px"></div>
<span class="t" style="left:1440px;top:496px">This Layer Only</span>
<div class="ck" style="left:1418px;top:518px"></div>
<svg style="left:1419px;top:518px" width="13" height="12" viewBox="0 0 13 12"><path d="M2.5 6 5.5 9 10.5 2" fill="none" stroke="#eee" stroke-width="2"/></svg>
<span class="t w" style="left:1440px;top:518px">Specular</span>
<div class="ck" style="left:1418px;top:540px"></div>
<svg style="left:1419px;top:540px" width="13" height="12" viewBox="0 0 13 12"><path d="M2.5 6 5.5 9 10.5 2" fill="none" stroke="#eee" stroke-width="2"/></svg>
<span class="t w" style="left:1440px;top:540px">Diffuse</span>

<!-- Shadow -->
<div class="sep" style="top:609px"></div>
<svg style="left:1257px;top:617px" width="10" height="10"><use href="#tr-d"/></svg>
<span class="t ph" style="left:1270px;top:613px">Shadow</span>
<svg style="left:1557px;top:620px" width="12" height="5"><use href="#grip"/></svg>
<div class="b ra l" style="left:1253px;top:641px;width:158px;height:20px;border-radius:4px 0 0 4px">No Shadow</div>
<div class="b on l" style="left:1410px;top:641px;width:160px;height:20px;border-radius:0 4px 4px 0">Ray Shadow</div>
<div class="b" style="left:1253px;top:666px;width:154px;height:20px;background:#000;border-radius:4px;border-color:#3a3a3a"></div>
<div class="ck" style="left:1418px;top:670px"></div>
<span class="t" style="left:1440px;top:669px">This Layer Only</span>
<div class="ck" style="left:1418px;top:692px"></div>
<span class="t" style="left:1440px;top:691px">Only Shadow</span>
<span class="t v" style="left:1260px;top:716px">Sampling:</span>
<div class="b n l" style="left:1253px;top:735px;width:154px;height:20px;text-align:left;padding-left:14px">Samples:</div>
<span class="t v" style="right:186px;top:738px">1</span>
<div class="la" style="left:1261px;top:742px"></div><div class="rr" style="left:1396px;top:742px"></div>
<div class="b n l" style="left:1415px;top:735px;width:155px;height:20px;text-align:left;padding-left:14px">Soft Size:</div>
<span class="t v" style="right:24px;top:738px">0.100</span>
<div class="la" style="left:1423px;top:742px"></div><div class="rr" style="left:1559px;top:742px"></div>
<div class="b on l" style="left:1253px;top:757px;width:158px;height:20px;border-radius:4px 0 0 4px">Adaptive QMC</div>
<div class="b ra l" style="left:1410px;top:757px;width:160px;height:20px;border-radius:0 4px 4px 0">Constant QMC</div>
<div class="b n l" style="left:1253px;top:782px;width:317px;height:20px;text-align:left;padding-left:14px">Threshold:</div>
<span class="t v" style="right:24px;top:785px">0.001</span>
<div class="la" style="left:1261px;top:789px"></div><div class="rr" style="left:1559px;top:789px"></div>

<div class="sep" style="top:809px"></div>
<svg style="left:1258px;top:818px" width="9" height="9"><use href="#tr-r"/></svg>
<span class="t ph" style="left:1270px;top:814px">Custom Properties</span>
<svg style="left:1557px;top:822px" width="12" height="5"><use href="#grip"/></svg>
</div></body></html>
